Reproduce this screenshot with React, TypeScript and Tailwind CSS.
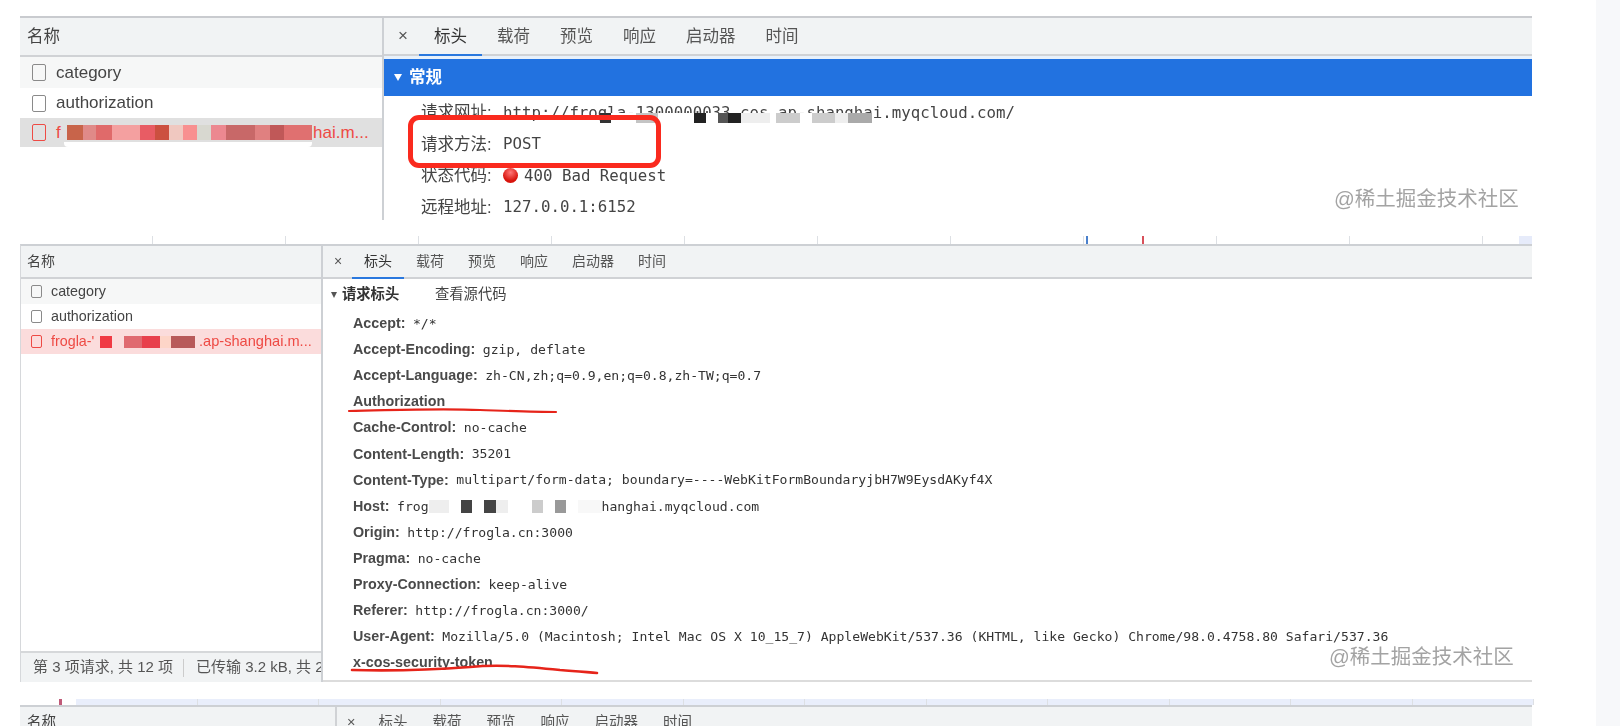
const sans = "font-['Liberation_Sans','Noto_Sans_CJK_SC',sans-serif]";
const mono = "font-['DejaVu_Sans_Mono','Noto_Sans_CJK_SC',monospace]";

type Cell = [number, string];

const TABS = ['标头', '载荷', '预览', '响应', '启动器', '时间'];

const HEADERS: [string, string][] = [
  ['Accept:', '*/*'],
  ['Accept-Encoding:', 'gzip, deflate'],
  ['Accept-Language:', 'zh-CN,zh;q=0.9,en;q=0.8,zh-TW;q=0.7'],
  ['Authorization', ''],
  ['Cache-Control:', 'no-cache'],
  ['Content-Length:', '35201'],
  ['Content-Type:', 'multipart/form-data; boundary=----WebKitFormBoundaryjbH7W9EysdAKyf4X'],
  ['Host:', ''],
  ['Origin:', 'http://frogla.cn:3000'],
  ['Pragma:', 'no-cache'],
  ['Proxy-Connection:', 'keep-alive'],
  ['Referer:', 'http://frogla.cn:3000/'],
  ['User-Agent:', 'Mozilla/5.0 (Macintosh; Intel Mac OS X 10_15_7) AppleWebKit/537.36 (KHTML, like Gecko) Chrome/98.0.4758.80 Safari/537.36'],
  ['x-cos-security-token', ''],
];

const MOSAIC_ROW: Cell[] = [
  [16, '#c8644a'], [13, '#e08a88'], [16, '#e06a6a'], [28, '#f4a0a0'], [15, '#e85c64'], [14, '#cc5040'],
  [14, '#f0c8c0'], [14, '#f89090'], [14, '#d8d8d0'], [15, '#ec8890'], [29, '#c86868'], [15, '#e08080'],
  [14, '#c05858'], [28, '#e07070'],
];
const MOSAIC_PINK: Cell[] = [
  [12, '#f03a44'], [12, 'transparent'], [18, '#e06a70'], [18, '#e8404c'], [11, '#fdd5c8'], [24, '#b85a5a'],
];
const MOSAIC_HOST: Cell[] = [
  [20, '#eeeeee'], [12, 'transparent'], [11, '#444444'], [12, 'transparent'], [12, '#444444'], [12, '#eeeeee'],
  [24, 'transparent'], [11, '#cccccc'], [12, 'transparent'], [11, '#999999'], [12, 'transparent'], [24, '#f8f8f8'],
];
const MOSAIC_URL: [number, number, string][] = [
  [600, 11, '#333333'], [611, 25, '#ffffff'], [636, 22, '#c4c4c4'], [658, 36, '#ffffff'], [694, 12, '#222222'],
  [706, 12, '#ffffff'], [718, 10, '#555555'], [728, 13, '#222222'], [741, 29, '#eeeeee'], [770, 6, '#ffffff'],
  [776, 24, '#cccccc'], [800, 12, '#ffffff'], [812, 23, '#cccccc'], [835, 13, '#eeeeee'], [848, 24, '#aaaaaa'],
];

function Mosaic({ cells, height }: { cells: Cell[]; height: number }) {
  return (
    <div className="flex shrink-0">
      {cells.map(([w, c], i) => (
        <div key={i} style={{ width: w, height, background: c }} />
      ))}
    </div>
  );
}

function FileBox({ red, big }: { red?: boolean; big?: boolean }) {
  return (
    <div
      className={`shrink-0 rounded-[2px] border ${big ? 'w-[14px] h-[17px]' : 'w-[11px] h-[13px]'} ${red ? 'border-[#ee4a44]' : 'border-[#8a8a8a]'}`}
    />
  );
}

function Ticks({ count, width }: { count: number; width: number }) {
  return (
    <>
      {Array.from({ length: count }).map((_, i) => (
        <div key={i} className="shrink-0 border-r border-[#dde0e4]" style={{ width }} />
      ))}
    </>
  );
}

function Watermark({ className }: { className: string }) {
  return (
    <div className={`absolute text-[20.5px] leading-[24px] text-[#a3a3a3] whitespace-nowrap ${sans} ${className}`}>
      @稀土掘金技术社区
    </div>
  );
}

function TopPanel() {
  return (
    <div className={`flex h-[204px] border-t-2 border-[#c9cbcf] overflow-hidden ${sans}`}>
      <div className="w-[364px] shrink-0 border-r-2 border-[#cdd0d4] flex flex-col">
        <div className="h-[39px] shrink-0 bg-[#f1f3f4] border-b-2 border-[#d0d2d5] flex items-center pl-[7px] text-[16.5px] text-[#444]">
          名称
        </div>
        <div className="h-[31px] bg-[#f6f7f7] flex items-center pl-[12px] gap-[10px] text-[17px] text-[#444]">
          <FileBox big />
          <span>category</span>
        </div>
        <div className="h-[30px] flex items-center pl-[12px] gap-[10px] text-[17px] text-[#444]">
          <FileBox big />
          <span>authorization</span>
        </div>
        <div className="relative h-[29px] w-[362px] bg-[#e0e0e0] flex items-center pl-[12px] text-[17px] text-[#ee4a44]">
          <FileBox big red />
          <span className="ml-[10px] w-[11px]">f</span>
          <Mosaic cells={MOSAIC_ROW} height={15} />
          <span className="ml-[1px] whitespace-nowrap">hai.m...</span>
          <div className="absolute left-[44px] top-[24px] w-[248px] h-[5px] rounded-b-[4px] bg-white" />
        </div>
      </div>
      <div className="flex-1 min-w-0 flex flex-col">
        <div className="h-[38px] shrink-0 bg-[#f1f3f4] border-b-2 border-[#d0d2d5] flex items-stretch pl-[14px] text-[16.5px] text-[#555]">
          <span className="w-[21px] text-[17px] flex items-center">×</span>
          {TABS.map((t, i) => (
            <div
              key={t}
              className={`px-[15px] flex items-center ${i === 0 ? 'border-b-2 border-[#2a78de] -mb-[2px] text-[#333]' : ''}`}
            >
              {t}
            </div>
          ))}
        </div>
        <div className="h-[3px] shrink-0 bg-[#e8f1fb]" />
        <div className="h-[37px] shrink-0 bg-[#2272e0] flex items-center pl-[10px] gap-[7px] text-white font-bold text-[16.5px]">
          <span className="w-0 h-0 border-l-[4px] border-r-[4px] border-t-[7px] border-l-transparent border-r-transparent border-t-white" />
          常规
        </div>
        <div className="pt-[1px] pl-[37px] text-[16.5px] text-[#444]">
          <div className="relative h-[31.5px] flex items-center whitespace-nowrap">
            <span className="w-[82px]">请求网址:</span>
            <span className={`${mono} text-[15.75px]`}>http://frogla-1300000033.cos.ap-shanghai.myqcloud.com/</span>
          </div>
          <div className="h-[31.5px] flex items-center">
            <span className="w-[82px]">请求方法:</span>
            <span className={`${mono} text-[15.75px]`}>POST</span>
          </div>
          <div className="h-[31.5px] flex items-center">
            <span className="w-[82px]">状态代码:</span>
            <span className="w-[15px] h-[15px] rounded-full bg-[radial-gradient(circle_at_50%_30%,#f77,#d8140c_65%)]" />
            <span className={`${mono} text-[15.75px] ml-[6px]`}>400 Bad Request</span>
          </div>
          <div className="h-[31.5px] flex items-center">
            <span className="w-[82px]">远程地址:</span>
            <span className={`${mono} text-[15.75px]`}>127.0.0.1:6152</span>
          </div>
        </div>
      </div>
    </div>
  );
}

function Ruler() {
  return (
    <div className="relative h-[8px] mt-[16px] flex">
      <Ticks count={11} width={133} />
      <div className="absolute left-[1066px] top-0 w-[2px] h-full bg-[#4a80cc]" />
      <div className="absolute left-[1122px] top-0 w-[2px] h-full bg-[#d8505a]" />
      <div className="absolute left-[1499px] top-0 w-[13px] h-full bg-[#e6ebfa]" />
    </div>
  );
}

function MiddlePanel() {
  return (
    <div className={`flex h-[438px] border-t-2 border-[#cdd0d4] border-l border-l-[#d6d8db] ${sans}`}>
      <div className="w-[302px] shrink-0 border-r-2 border-[#cdd0d4] flex flex-col overflow-hidden">
        <div className="h-[33px] shrink-0 bg-[#f1f3f4] border-b-2 border-[#d0d2d5] flex items-center pl-[6px] text-[14px] text-[#444]">
          名称
        </div>
        <div className="h-[25px] shrink-0 bg-[#f6f7f7] flex items-center pl-[10px] gap-[9px] text-[14.3px] text-[#444]">
          <FileBox />
          <span>category</span>
        </div>
        <div className="h-[25px] shrink-0 flex items-center pl-[10px] gap-[9px] text-[14.3px] text-[#444]">
          <FileBox />
          <span>authorization</span>
        </div>
        <div className="h-[25px] shrink-0 bg-[#fbdcdc] flex items-center pl-[10px] text-[14.3px] text-[#ee4a44] whitespace-nowrap">
          <FileBox red />
          <span className="ml-[9px] w-[49px]">frogla-'</span>
          <Mosaic cells={MOSAIC_PINK} height={12} />
          <span className="ml-[4px] text-[14.6px]">.ap-shanghai.m...</span>
        </div>
        <div className="flex-1" />
        <div className="h-[31px] shrink-0 bg-[#f1f3f4] border-t-2 border-[#d6d8da] flex items-center pl-[12px] text-[15px] text-[#555] whitespace-nowrap">
          <span className="shrink-0">第 3 项请求, 共 12 项</span>
          <div className="w-px h-[18px] shrink-0 bg-[#ccc] ml-[10px] mr-[12px]" />
          <span className="shrink-0">已传输 3.2 kB, 共 2</span>
        </div>
      </div>
      <div className="flex-1 min-w-0 h-[436px] border-b-2 border-[#dcdcdc] flex flex-col overflow-hidden">
        <div className="h-[33px] shrink-0 bg-[#f1f3f4] border-b-2 border-[#d0d2d5] flex items-stretch pl-[11px] text-[14px] text-[#555]">
          <span className="w-[18px] flex items-center">×</span>
          {TABS.map((t, i) => (
            <div
              key={t}
              className={`px-[12px] flex items-center ${i === 0 ? 'border-b-2 border-[#2a78de] -mb-[2px] text-[#333]' : ''}`}
            >
              {t}
            </div>
          ))}
        </div>
        <div className="h-[32px] shrink-0 flex items-center pl-[8px] text-[14.3px] text-[#333]">
          <span className="w-0 h-0 border-l-[3px] border-r-[3px] border-t-[6px] border-l-transparent border-r-transparent border-t-[#555]" />
          <span className="ml-[5px] font-bold w-[93px]">请求标头</span>
          <span className="text-[#444]">查看源代码</span>
        </div>
        <div className="pl-[30px]">
          {HEADERS.map(([name, value]) => (
            <div key={name} className="h-[26.05px] flex items-center whitespace-nowrap">
              <span className="font-bold text-[14.3px] text-[#4a4a4a] mr-[7.5px]">{name}</span>
              {name === 'Host:' ? (
                <>
                  <span className={`${mono} text-[13.1px] text-[#333]`}>frog</span>
                  <Mosaic cells={MOSAIC_HOST} height={13} />
                  <span className={`${mono} text-[13.1px] text-[#333]`}>hanghai.myqcloud.com</span>
                </>
              ) : (
                <span className={`${mono} text-[13.1px] text-[#333]`}>{value}</span>
              )}
            </div>
          ))}
        </div>
      </div>
    </div>
  );
}

function BottomPanel() {
  return (
    <>
      <div className="mt-[17px] h-[6px] flex">
        <div className="relative w-[56px] shrink-0">
          <div className="absolute left-[39px] top-0 w-[3px] h-full bg-[#c05a78]" />
        </div>
        <div className="flex-1 flex bg-[#e9eefb]">
          <Ticks count={12} width={121.5} />
        </div>
      </div>
      <div className={`flex flex-1 min-h-0 border-t-2 border-[#cdd0d4] bg-[#f1f3f4] overflow-hidden ${sans}`}>
        <div className="w-[317px] shrink-0 border-r-2 border-[#d0d2d5] pl-[7px] pt-[5px] text-[14.5px] text-[#444]">
          名称
        </div>
        <div className="flex pl-[10px] pt-[5px] text-[14.5px] text-[#555] items-start">
          <span className="w-[19px]">×</span>
          {TABS.map(t => (
            <div key={t} className="px-[12.5px]">
              {t}
            </div>
          ))}
        </div>
      </div>
    </>
  );
}

export default function App() {
  return (
    <div className="relative w-[1620px] h-[726px] bg-white flex overflow-hidden">
      <div className="ml-[20px] w-[1512px] shrink-0 pt-[16px] flex flex-col h-full blur-[0.4px]">
        <TopPanel />
        <Ruler />
        <MiddlePanel />
        <BottomPanel />
      </div>
      <div className="ml-auto w-[24px] h-full bg-[#f7f8fa]" />

      {/* smudged url, painted over the text like in the original */}
      {MOSAIC_URL.map(([x, w, c]) => (
        <div key={x} className="absolute top-[113px] h-[10px]" style={{ left: x, width: w, background: c }} />
      ))}

      <div className="absolute left-[408px] top-[115px] w-[253px] h-[53px] rounded-[11px] border-[5px] border-[#fa2a1e]" />

      <svg className="absolute left-0 top-0 pointer-events-none" width="1620" height="726" fill="none">
        <path d="M349 411 C400 410 440 408 480 410 C510 411 535 412 556 412" stroke="#e6241a" strokeWidth="2.2" strokeLinecap="round" />
        <path d="M352 670 C390 671 430 670 470 667 C500 664 530 667 560 670 C575 671 585 672 597 673" stroke="#e6241a" strokeWidth="2.6" strokeLinecap="round" />
      </svg>

      <Watermark className="left-[1334px] top-[187px]" />
      <Watermark className="left-[1329px] top-[645px]" />
    </div>
  );
}
